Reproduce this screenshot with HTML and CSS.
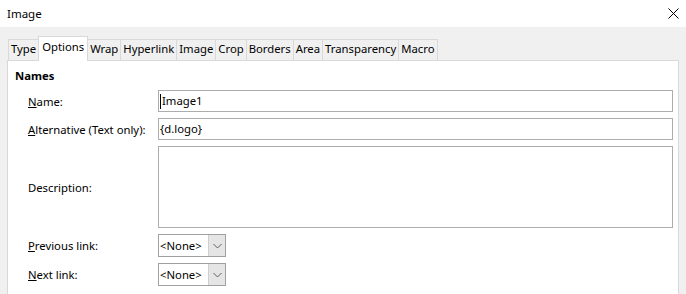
FILE: index.html
```html
<!DOCTYPE html>
<html>
<head>
  <meta name="viewport" content="width=device-width, initial-scale=1.0">
  <link rel="stylesheet" href="styles.css">
</head>
<body>
  <div class="dialog">
    <div class="title-bar">
      <div class="title-text">Image</div>
      <div class="close-button">
        <svg width="11" height="11" viewBox="0 0 11 11">
          <path d="M0.5 0.5 L10.5 10.5 M10.5 0.5 L0.5 10.5" stroke="#000" stroke-width="1" fill="none"/>
        </svg>
      </div>
    </div>
    <div class="tabs">
      <div class="tab">Type</div>
      <div class="tab selected">Options</div>
      <div class="tab">Wrap</div>
      <div class="tab">Hyperlink</div>
      <div class="tab">Image</div>
      <div class="tab">Crop</div>
      <div class="tab">Borders</div>
      <div class="tab">Area</div>
      <div class="tab">Transparency</div>
      <div class="tab">Macro</div>
    </div>
    <div class="panel">
      <div class="section-title">Names</div>
      <div class="form">
        <label class="label"><u>N</u>ame:</label>
        <div class="input"><span class="caret"></span>Image1</div>

        <label class="label"><u>A</u>lternative (Text only):</label>
        <div class="input">{d.logo}</div>

        <label class="label">Description:</label>
        <div class="input textarea"></div>

        <label class="label"><u>P</u>revious link:</label>
        <div class="select">
          <span class="select-value">&lt;None&gt;</span>
          <span class="select-button">
            <svg width="9" height="6" viewBox="0 0 9 6">
              <path d="M0.5 1 L4.5 5 L8.5 1" stroke="#606060" stroke-width="1" fill="none"/>
            </svg>
          </span>
        </div>

        <label class="label"><u>N</u>ext link:</label>
        <div class="select">
          <span class="select-value">&lt;None&gt;</span>
          <span class="select-button">
            <svg width="9" height="6" viewBox="0 0 9 6">
              <path d="M0.5 1 L4.5 5 L8.5 1" stroke="#606060" stroke-width="1" fill="none"/>
            </svg>
          </span>
        </div>
      </div>
    </div>
  </div>
</body>
</html>
```

FILE: styles.css
```css
* {
  margin: 0;
  padding: 0;
  box-sizing: border-box;
}

body {
  width: 686px;
  height: 294px;
  overflow: hidden;
  background: #f0f0f0;
  color: #000;
  font-family: 'Segoe UI', 'Noto Sans', 'Liberation Sans', sans-serif;
  font-size: 11.3px;
}

.dialog {
  height: 294px;
  display: flex;
  flex-direction: column;
}

.title-bar {
  height: 27px;
  background: #fff;
  display: flex;
  align-items: center;
  justify-content: space-between;
  padding: 0 7px 0 7px;
}

.title-text {
  font-size: 11.5px;
}

.close-button {
  display: flex;
  align-items: center;
  margin-top: -1px;
}

.tabs {
  display: flex;
  align-items: flex-end;
  height: 33px;
  padding-left: 8px;
  position: relative;
  z-index: 1;
}

.tab {
  height: 21px;
  line-height: 18px;
  padding: 0 2px;
  border: 1px solid #d9d9d9;
  border-bottom: none;
  margin-right: -1px;
  background: #f0f0f0;
  white-space: nowrap;
}

.tab.selected {
  height: 25px;
  line-height: 20px;
  background: #fff;
  padding: 0 3px;
  margin-bottom: -1px;
  position: relative;
  z-index: 2;
}

.panel {
  flex: 1;
  margin: 0 7px 0 7px;
  background: #fff;
  border: 1px solid #d9d9d9;
  border-bottom: none;
  padding: 7px 5px 0 7px;
}

.section-title {
  font-weight: bold;
  line-height: 16px;
  margin-bottom: 6px;
}

.form {
  display: grid;
  grid-template-columns: 130px 1fr;
  row-gap: 6px;
  margin-left: 13px;
  align-items: center;
}

.label {
  white-space: nowrap;
}

.input {
  height: 22px;
  border: 1px solid #adadad;
  padding: 0 1px;
  line-height: 20px;
  display: flex;
  align-items: center;
}

.textarea {
  height: 82px;
}

.caret {
  width: 1px;
  height: 15px;
  background: #000;
  margin-right: 1px;
}

.select {
  width: 68px;
  height: 23px;
  border: 1px solid #a0a0a0;
  display: flex;
}

.select-value {
  flex: 1;
  line-height: 21px;
  padding-left: 1px;
}

.select-button {
  width: 17px;
  background: #e5e5e5;
  border-left: 1px solid #cfcfcf;
  display: flex;
  align-items: center;
  justify-content: center;
}
```
